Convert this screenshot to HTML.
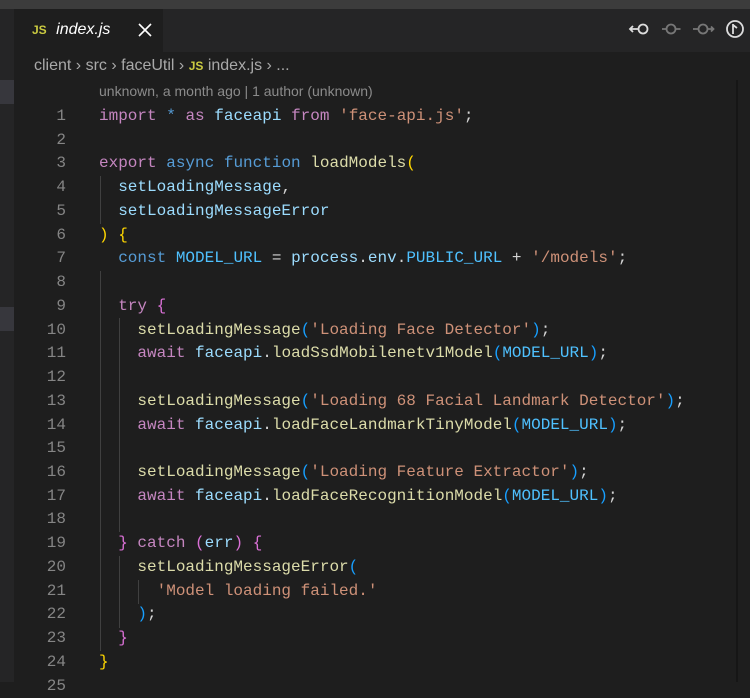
<!DOCTYPE html>
<html><head><meta charset="utf-8"><style>
body{margin:0;width:750px;height:682px;overflow:hidden;background:#1e1e1e;position:relative;font-family:"Liberation Sans",sans-serif}
.top{position:absolute;left:0;top:0;width:750px;height:9px;background:#3c3c3c}
.side{position:absolute;left:0;top:9px;width:14px;height:673px;background:#252526}
.tabs{position:absolute;left:14px;top:9px;width:736px;height:43px;background:#252526}
.tab{position:absolute;left:14px;top:9px;width:149px;height:43px;background:#1e1e1e}
.js{color:#cbcb41;font-weight:bold;font-size:12px}
.crumb{position:absolute;left:34px;top:57px;color:#a9a9a9;font-size:16px}
.blame{position:absolute;left:99px;top:83px;color:#8b8b8b;font-size:14px}
.code{position:absolute;left:0;top:105px;font-family:"Liberation Mono",monospace;font-size:16px;line-height:23.74px;white-space:pre;color:#d4d4d4}
.ln{display:inline-block;width:66px;text-align:right;color:#858585;margin-right:33px}
.k{color:#c586c0}.b{color:#569cd6}.v{color:#9cdcfe}.f{color:#dcdcaa}.s{color:#ce9178}.c{color:#4fc1ff}
.y{color:#ffd700}.p{color:#da70d6}.u{color:#179fff}
.g{position:absolute;width:1px;background:#404040}
</style></head><body>
<div class="top"></div>
<div class="side"></div>
<div style="position:absolute;left:0;top:80px;width:14px;height:24px;background:#37373d"></div>
<div style="position:absolute;left:0;top:307px;width:14px;height:24px;background:#37373d"></div>
<div class="tabs"></div>
<div class="tab"></div>
<div style="position:absolute;left:32px;top:21px"><span class="js">JS</span> <span style="color:#fff;font-style:italic;font-size:16px;margin-left:5px">index.js</span></div>
<svg style="position:absolute;left:138px;top:23px" width="14" height="14" viewBox="0 0 14 14"><path d="M1 1L13 13M13 1L1 13" stroke="#fff" stroke-width="1.6"/></svg>
<svg style="position:absolute;left:628px;top:18px" width="122" height="24" viewBox="0 0 122 24" fill="none" stroke-width="1.8">
<g stroke="#ddd"><circle cx="15" cy="11" r="4.5"/><path d="M10 11H2M5 8L2 11L5 14"/></g>
<g stroke="#777"><circle cx="43" cy="11" r="4.5"/><path d="M34 11h4.5M47.5 11h5"/><circle cx="75" cy="11" r="4.5"/><path d="M65 11h5.5M79.5 11h6M83 8.5l2.5 2.5-2.5 2.5"/></g>
<g stroke="#ddd"><circle cx="107" cy="11" r="8"/><path d="M105 6v10M105 7l4 3"/></g>
</svg>
<div class="crumb">client › src › faceUtil › <span class="js">JS</span> index.js › ...</div>
<div class="blame">unknown, a month ago | 1 author (unknown)</div>
<div class="g" style="left:100px;top:176px;height:48px"></div>
<div class="g" style="left:100px;top:271px;height:380px"></div>
<div class="g" style="left:119px;top:318px;height:214px"></div>
<div class="g" style="left:119px;top:556px;height:72px"></div>
<div class="g" style="left:138px;top:580px;height:24px"></div>
<div style="position:absolute;left:736px;top:80px;width:2px;height:602px;background:#161616"></div>
<div class="code"><span class="ln">1</span><span class="k">import</span> <span class="b">*</span> <span class="k">as</span> <span class="v">faceapi</span> <span class="k">from</span> <span class="s">'face-api.js'</span>;
<span class="ln">2</span>
<span class="ln">3</span><span class="k">export</span> <span class="b">async</span> <span class="b">function</span> <span class="f">loadModels</span><span class="y">(</span>
<span class="ln">4</span>  <span class="v">setLoadingMessage</span>,
<span class="ln">5</span>  <span class="v">setLoadingMessageError</span>
<span class="ln">6</span><span class="y">)</span> <span class="y">{</span>
<span class="ln">7</span>  <span class="b">const</span> <span class="c">MODEL_URL</span> = <span class="v">process</span>.<span class="v">env</span>.<span class="c">PUBLIC_URL</span> + <span class="s">'/models'</span>;
<span class="ln">8</span>
<span class="ln">9</span>  <span class="k">try</span> <span class="p">{</span>
<span class="ln">10</span>    <span class="f">setLoadingMessage</span><span class="u">(</span><span class="s">'Loading Face Detector'</span><span class="u">)</span>;
<span class="ln">11</span>    <span class="k">await</span> <span class="v">faceapi</span>.<span class="f">loadSsdMobilenetv1Model</span><span class="u">(</span><span class="c">MODEL_URL</span><span class="u">)</span>;
<span class="ln">12</span>
<span class="ln">13</span>    <span class="f">setLoadingMessage</span><span class="u">(</span><span class="s">'Loading 68 Facial Landmark Detector'</span><span class="u">)</span>;
<span class="ln">14</span>    <span class="k">await</span> <span class="v">faceapi</span>.<span class="f">loadFaceLandmarkTinyModel</span><span class="u">(</span><span class="c">MODEL_URL</span><span class="u">)</span>;
<span class="ln">15</span>
<span class="ln">16</span>    <span class="f">setLoadingMessage</span><span class="u">(</span><span class="s">'Loading Feature Extractor'</span><span class="u">)</span>;
<span class="ln">17</span>    <span class="k">await</span> <span class="v">faceapi</span>.<span class="f">loadFaceRecognitionModel</span><span class="u">(</span><span class="c">MODEL_URL</span><span class="u">)</span>;
<span class="ln">18</span>
<span class="ln">19</span>  <span class="p">}</span> <span class="k">catch</span> <span class="p">(</span><span class="v">err</span><span class="p">)</span> <span class="p">{</span>
<span class="ln">20</span>    <span class="f">setLoadingMessageError</span><span class="u">(</span>
<span class="ln">21</span>      <span class="s">'Model loading failed.'</span>
<span class="ln">22</span>    <span class="u">)</span>;
<span class="ln">23</span>  <span class="p">}</span>
<span class="ln">24</span><span class="y">}</span>
<span class="ln">25</span></div>
</body></html>
